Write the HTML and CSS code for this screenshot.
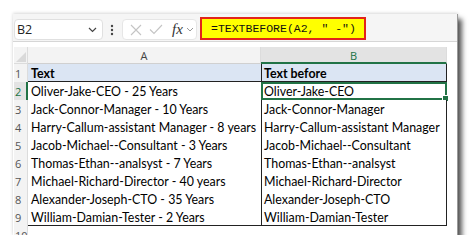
FILE: index.html
```html
<!DOCTYPE html>
<html>
<head>
<meta charset="utf-8">
<link rel="stylesheet" href="styles.css">
</head>
<body>
<div class="frame">
  <div class="toolbar">
    <div class="namebox">
      <span class="ref">B2</span>
      <svg class="chev" width="9" height="6" viewBox="0 0 9 6"><path d="M1 1 L4.5 4.5 L8 1" fill="none" stroke="#444" stroke-width="1.2"/></svg>
    </div>
    <svg class="dots" width="4" height="12" viewBox="0 0 4 12"><circle cx="2" cy="2" r="1.2" fill="#444"/><circle cx="2" cy="6" r="1.2" fill="#444"/><circle cx="2" cy="10" r="1.2" fill="#444"/></svg>
    <div class="fxbox">
      <svg class="ico" width="12" height="12" viewBox="0 0 12 12"><path d="M1 1 L11 11 M11 1 L1 11" stroke="#c4c4c4" stroke-width="1.1"/></svg>
      <svg class="ico" width="14" height="11" viewBox="0 0 14 11"><path d="M1 5.5 L5 9.5 L13 1" fill="none" stroke="#c4c4c4" stroke-width="1.1"/></svg>
      <span class="fx">fx</span>
      <svg class="chev small" width="8" height="5" viewBox="0 0 8 5"><path d="M1 1 L4 4 L7 1" fill="none" stroke="#999" stroke-width="1"/></svg>
    </div>
    <div class="formula">=TEXTBEFORE(A2, " -")</div>
  </div>
  <div class="sheet">
    <div class="corner"><svg width="10" height="10" viewBox="0 0 10 10"><path d="M10 0 L10 10 L0 10 Z" fill="#d9d9d9"/></svg></div>
    <div class="colhead">A</div>
    <div class="colhead sel">B</div>

    <div class="rowhead">1</div>
    <div class="cell a hdr">Text</div>
    <div class="cell b hdr">Text before</div>

    <div class="rowhead selrow">2</div>
    <div class="cell a">Oliver-Jake-CEO - 25 Years</div>
    <div class="cell b active">Oliver-Jake-CEO<span class="handle"></span></div>

    <div class="rowhead">3</div>
    <div class="cell a">Jack-Connor-Manager - 10 Years</div>
    <div class="cell b">Jack-Connor-Manager</div>

    <div class="rowhead">4</div>
    <div class="cell a">Harry-Callum-assistant Manager - 8 years</div>
    <div class="cell b">Harry-Callum-assistant Manager</div>

    <div class="rowhead">5</div>
    <div class="cell a">Jacob-Michael--Consultant - 3 Years</div>
    <div class="cell b">Jacob-Michael--Consultant</div>

    <div class="rowhead">6</div>
    <div class="cell a">Thomas-Ethan--analsyst - 7 Years</div>
    <div class="cell b">Thomas-Ethan--analsyst</div>

    <div class="rowhead">7</div>
    <div class="cell a">Michael-Richard-Director - 40 years</div>
    <div class="cell b">Michael-Richard-Director</div>

    <div class="rowhead">8</div>
    <div class="cell a">Alexander-Joseph-CTO - 35 Years</div>
    <div class="cell b">Alexander-Joseph-CTO</div>

    <div class="rowhead">9</div>
    <div class="cell a last">William-Damian-Tester - 2 Years</div>
    <div class="cell b last">William-Damian-Tester</div>

    <div class="rowhead">10</div>
    <div class="cell"></div>
    <div class="cell"></div>
  </div>
</div>
</body>
</html>
```

FILE: styles.css
```css
html, body {
  margin: 0;
  padding: 0;
  background: #fff;
}
.frame {
  margin: 14px 0 0 13px;
  width: 445px;
  height: 221px;
  overflow: hidden;
  background: #fff;
  border-right: 1px solid #9a9a9a;
  box-sizing: border-box;
  box-shadow: 4px 5px 5px rgba(0,0,0,0.65), 0 -1px 3px rgba(0,0,0,0.15);
}
.toolbar {
  height: 28px;
  box-sizing: border-box;
  background: #f5f5f5;
  border-bottom: 1px solid #d6d6d6;
  display: flex;
  align-items: flex-start;
}
.namebox {
  margin: 5px 0 0 1px;
  width: 89px;
  height: 21px;
  box-sizing: border-box;
  background: #fff;
  border: 1px solid #e0e0e0;
  border-radius: 4px;
  display: flex;
  align-items: center;
  padding: 0 5px 0 2px;
  font-family: "Open Sans", "Liberation Sans", sans-serif;
  font-size: 12.5px;
  color: #222;
}
.ref { flex: 1; }
.dots { margin: 10px 0 0 7px; }
.fxbox {
  margin: 5px 0 0 8px;
  width: 75px;
  height: 21px;
  box-sizing: border-box;
  background: #fff;
  border: 1px solid #e6e6e6;
  border-radius: 4px;
  display: flex;
  align-items: center;
  padding-left: 7px;
  gap: 7px;
}
.fx {
  font-family: "Liberation Serif", serif;
  font-style: italic;
  font-size: 15px;
  color: #333;
  margin-left: 2px;
  margin-right: -4px;
}
.formula {
  margin: 3px 0 0 3px;
  width: 166px;
  height: 23px;
  box-sizing: border-box;
  background: #ffff00;
  border: 2px solid #e2231a;
  font-family: "Liberation Mono", monospace;
  font-size: 11.5px;
  line-height: 19px;
  padding-left: 9px;
  color: #111;
  white-space: nowrap;
}
.sheet {
  margin: 5px 0 0 1px;
  display: grid;
  grid-template-columns: 14px 233px 186px;
  grid-template-rows: 17px repeat(10, 18px);
  font-family: "Lato", "Liberation Sans", sans-serif;
}
.corner {
  background: #f3f3f3;
  border-right: 1px solid #dcdcdc;
  border-bottom: 1px solid #dcdcdc;
  box-sizing: border-box;
  display: flex;
  align-items: flex-end;
  justify-content: flex-end;
  padding: 0 1px 1px 0;
}
.colhead {
  background: #f3f3f3;
  border-right: 1px solid #dcdcdc;
  border-bottom: 1px solid #d0d0d0;
  box-sizing: border-box;
  text-align: center;
  font-family: "Open Sans", "Liberation Sans", sans-serif;
  font-size: 11px;
  line-height: 18px;
  color: #444;
}
.colhead.sel {
  background: #e3e3e3;
  color: #217346;
  border-bottom: 2px solid #217346;
}
.rowhead {
  background: #f3f3f3;
  border-right: 1px solid #dcdcdc;
  box-sizing: border-box;
  font-family: "Open Sans", "Liberation Sans", sans-serif;
  font-size: 11px;
  line-height: 18px;
  padding: 1px 0 0 1px;
  color: #555;
  overflow: hidden;
}
.rowhead.selrow {
  color: #217346;
  background: #e3e3e3;
  border-right: 2px solid #217346;
}
.cell {
  position: relative;
  font-size: 12.4px;
  line-height: 18px;
  padding-top: 1px;
  color: #000;
  padding-left: 3px;
  white-space: nowrap;
  box-sizing: border-box;
}
.cell.b {
  padding-left: 2px;
  border-left: 1px solid #222;
  border-right: 1px solid #222;
  background: #fff;
}
.cell.hdr {
  background: #dbe5f3;
  font-weight: bold;
  border-bottom: 1px solid #222;
}
.cell.last { border-bottom: 1px solid #222; }
.cell.active {
  border: 2px solid #217346;
  padding-left: 1px;
  padding-top: 0;
  line-height: 16px;
}
.handle {
  position: absolute;
  right: -4px;
  bottom: -4px;
  width: 5px;
  height: 5px;
  background: #217346;
  border: 1px solid #fff;
}
```
